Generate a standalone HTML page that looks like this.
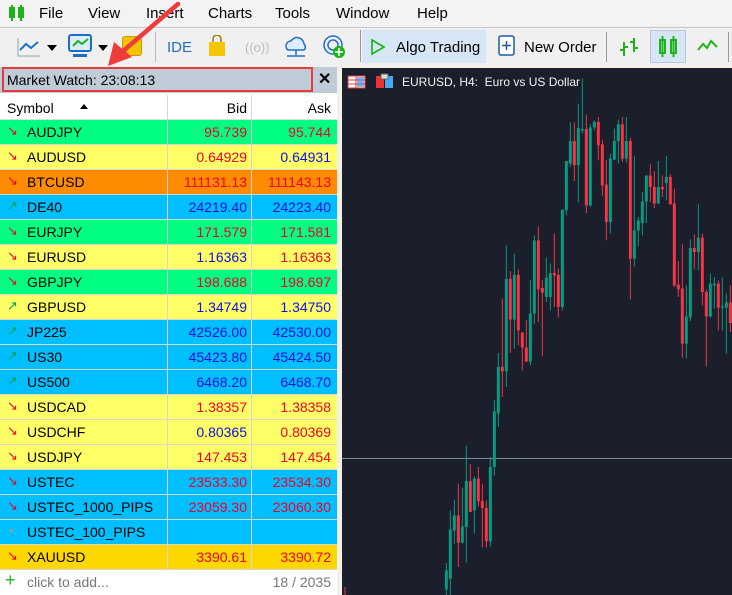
<!DOCTYPE html>
<html><head><meta charset="utf-8"><style>
*{margin:0;padding:0;box-sizing:border-box}
body{width:732px;height:595px;overflow:hidden;background:#f0f0f0;font-family:"Liberation Sans",sans-serif;position:relative}
.menu{position:absolute;top:0;left:0;width:732px;height:26px;background:#f3f3f3;font-size:15px;color:#000}
.menu span{position:absolute;top:5px}
.tb{position:absolute;top:27px;left:0;width:732px;height:37px;background:#f0f0f0;border-top:1px solid #c8c8c8}
.tb .t{position:absolute;top:11px;font-size:15px;color:#000}
.panel{position:absolute;left:0;top:67px;width:337px;height:528px;background:#fff}
.title{position:absolute;left:2px;top:0;width:311px;height:25px;border:2px solid #e8393f;background:#bfcbd7;font-size:14px;padding:3px 0 0 3px;color:#000}
.titlebg{position:absolute;left:0;top:0;width:337px;height:26px;background:#bfcbd7}
.x{position:absolute;left:318px;top:2px;font-size:16px;font-weight:bold}
.hdr{position:absolute;top:28px;left:0;width:337px;height:25px;font-size:14px;background:#fff;border-bottom:1px solid #ddd}
.row{position:absolute;left:0;width:337px;height:25px;font-size:14px;border-bottom:1px solid #d6d6d6}
.c{position:absolute;top:4px}
.s{left:27px;color:#000}
.b{right:90px;text-align:right}
.a{right:6px;text-align:right}
.v1{position:absolute;left:167px;top:0;width:1px;height:25px;background:#d6d6d6}
.v2{position:absolute;left:251px;top:0;width:1px;height:25px;background:#d6d6d6}
.ic{position:absolute;left:7px;top:3px;font-size:13px}
.r{color:#f0002a}.bl{color:#1010e0}
.chart{position:absolute;left:341px;top:67px;width:391px;height:528px;background:#1b1f2b;border-left:1px solid #f7f1cc;border-top:1px solid #f7f1cc}
</style></head><body>
<div class="menu">
<svg style="position:absolute;left:8px;top:5px" width="18" height="16"><g stroke="#1db31d" stroke-width="2" fill="none"><rect x="2" y="3" width="4" height="9"/><line x1="4" y1="0" x2="4" y2="16"/><rect x="11" y="3" width="4" height="9"/><line x1="13" y1="0" x2="13" y2="16"/></g></svg>
<span style="left:39px">File</span><span style="left:88px">View</span><span style="left:146px">Insert</span><span style="left:208px">Charts</span><span style="left:275px">Tools</span><span style="left:336px">Window</span><span style="left:417px">Help</span>
</div>
<div class="tb">
<svg style="position:absolute;left:16px;top:8px" width="26" height="22"><path d="M2 2 V20 H24" stroke="#8aa" fill="none"/><path d="M4 14 L10 8 L15 12 L22 6" stroke="#1e6ec8" stroke-width="2" fill="none"/></svg>
<div style="position:absolute;left:47px;top:17px;border:5px solid transparent;border-top:6px solid #000"></div>
<svg style="position:absolute;left:67px;top:5px" width="28" height="26"><rect x="2" y="2" width="22" height="16" rx="2" fill="#dceeff" stroke="#1e6ec8" stroke-width="2"/><path d="M6 13 L11 8 L15 11 L21 6" stroke="#1db31d" stroke-width="2" fill="none"/><rect x="6" y="21" width="14" height="3" fill="#1e6ec8"/></svg>
<div style="position:absolute;left:98px;top:17px;border:5px solid transparent;border-top:6px solid #000"></div>
<div style="position:absolute;left:122px;top:8px;width:20px;height:20px;background:#f5c400;border:1px solid #c79a00;border-radius:3px"></div>
<div style="position:absolute;left:155px;top:4px;width:1px;height:30px;background:#bbb"></div>
<span class="t" style="left:167px;color:#1e6ec8">IDE</span>
<svg style="position:absolute;left:207px;top:7px" width="20" height="22"><path d="M6 7 V4 a4 4 0 0 1 8 0 V7" stroke="#a07800" fill="none" stroke-width="1.5"/><rect x="2" y="7" width="16" height="14" fill="#f7c500"/></svg>
<span class="t" style="left:245px;color:#bbb;font-size:13px;top:12px">((o))</span>
<svg style="position:absolute;left:283px;top:8px" width="26" height="22"><path d="M5 14 a5 5 0 0 1 3-9 a7 7 0 0 1 13 3 a4 4 0 0 1 0 6 Z" fill="#dceeff" stroke="#1e6ec8" stroke-width="1.5"/><path d="M13 14 V19 M4 20 H22" stroke="#1e6ec8" stroke-width="1.5"/></svg>
<svg style="position:absolute;left:322px;top:6px" width="26" height="26"><circle cx="11" cy="11" r="9" fill="none" stroke="#1e6ec8" stroke-width="1.5"/><circle cx="11" cy="11" r="5" fill="none" stroke="#1e6ec8" stroke-width="1.5"/><circle cx="17" cy="18" r="6" fill="#1db31d"/><path d="M17 14 V22 M13 18 H21" stroke="#fff" stroke-width="1.5"/></svg>
<div style="position:absolute;left:360px;top:2px;width:1px;height:32px;background:#999"></div>
<div style="position:absolute;left:362px;top:2px;width:124px;height:33px;background:#d7e6f4"></div>
<svg style="position:absolute;left:370px;top:10px" width="16" height="18"><path d="M2 2 L14 9 L2 16 Z" fill="none" stroke="#1db31d" stroke-width="1.7"/></svg>
<span class="t" style="left:396px">Algo Trading</span>
<svg style="position:absolute;left:497px;top:6px" width="20" height="24"><rect x="2" y="2" width="15" height="19" rx="2" fill="#fff" stroke="#1e5aa0" stroke-width="1.5"/><path d="M9.5 7 V16 M5 11.5 H14" stroke="#1e5aa0" stroke-width="1.5"/></svg>
<span class="t" style="left:524px">New Order</span>
<div style="position:absolute;left:606px;top:4px;width:1px;height:30px;background:#999"></div>
<svg style="position:absolute;left:618px;top:8px" width="24" height="22"><path d="M6 6 V20 M2 14 H6 M6 11 H10 M16 2 V16 M12 6 H16 M16 12 H20" stroke="#1db31d" stroke-width="2" fill="none"/></svg>
<div style="position:absolute;left:650px;top:2px;width:36px;height:33px;background:#d7e6f4;border:1px solid #b6c8da"></div>
<svg style="position:absolute;left:658px;top:7px" width="22" height="24"><g stroke="#1db31d" stroke-width="2" fill="none"><rect x="2" y="5" width="5" height="13"/><line x1="4.5" y1="1" x2="4.5" y2="22"/><rect x="13" y="5" width="5" height="13"/><line x1="15.5" y1="1" x2="15.5" y2="22"/></g></svg>
<svg style="position:absolute;left:696px;top:10px" width="24" height="16"><path d="M2 12 L7 6 L11 10 L15 3 L21 9" stroke="#1db31d" stroke-width="2" fill="none"/></svg>
<div style="position:absolute;left:728px;top:4px;width:1px;height:30px;background:#999"></div>
</div>
<div style="position:absolute;left:0;top:64px;width:732px;height:3px;background:#f0f0f0"></div>

<div class="panel">
<div class="titlebg"></div>
<div class="title">Market Watch: 23:08:13</div>
<div class="x">✕</div>
<div class="hdr"><span class="c" style="left:7px;top:5px">Symbol</span><span style="position:absolute;left:80px;top:9px;border:4px solid transparent;border-bottom:5px solid #000;border-top:0"></span><span class="c" style="right:90px;top:5px">Bid</span><span class="c" style="right:6px;top:5px">Ask</span><div class="v1"></div><div class="v2"></div></div>
</div>
<div id="rows" style="position:absolute;left:0;top:120px">
<div class="row" style="top:0;background:#00ff80"><span class="ic r">↘</span><span class="c s">AUDJPY</span><span class="c b r">95.739</span><span class="c a r">95.744</span><div class="v1"></div><div class="v2"></div></div>
<div class="row" style="top:25px;background:#ffff66"><span class="ic r">↘</span><span class="c s">AUDUSD</span><span class="c b r">0.64929</span><span class="c a bl">0.64931</span><div class="v1"></div><div class="v2"></div></div>
<div class="row" style="top:50px;background:#ff8c00"><span class="ic r">↘</span><span class="c s">BTCUSD</span><span class="c b r">111131.13</span><span class="c a r">111143.13</span><div class="v1"></div><div class="v2"></div></div>
<div class="row" style="top:75px;background:#00bfff"><span class="ic" style="color:#00a050">↗</span><span class="c s">DE40</span><span class="c b bl">24219.40</span><span class="c a bl">24223.40</span><div class="v1"></div><div class="v2"></div></div>
<div class="row" style="top:100px;background:#00ff80"><span class="ic r">↘</span><span class="c s">EURJPY</span><span class="c b r">171.579</span><span class="c a r">171.581</span><div class="v1"></div><div class="v2"></div></div>
<div class="row" style="top:125px;background:#ffff66"><span class="ic r">↘</span><span class="c s">EURUSD</span><span class="c b bl">1.16363</span><span class="c a r">1.16363</span><div class="v1"></div><div class="v2"></div></div>
<div class="row" style="top:150px;background:#00ff80"><span class="ic r">↘</span><span class="c s">GBPJPY</span><span class="c b r">198.688</span><span class="c a r">198.697</span><div class="v1"></div><div class="v2"></div></div>
<div class="row" style="top:175px;background:#ffff66"><span class="ic" style="color:#00a050">↗</span><span class="c s">GBPUSD</span><span class="c b bl">1.34749</span><span class="c a bl">1.34750</span><div class="v1"></div><div class="v2"></div></div>
<div class="row" style="top:200px;background:#00bfff"><span class="ic" style="color:#00a050">↗</span><span class="c s">JP225</span><span class="c b bl">42526.00</span><span class="c a bl">42530.00</span><div class="v1"></div><div class="v2"></div></div>
<div class="row" style="top:225px;background:#00bfff"><span class="ic" style="color:#00a050">↗</span><span class="c s">US30</span><span class="c b bl">45423.80</span><span class="c a bl">45424.50</span><div class="v1"></div><div class="v2"></div></div>
<div class="row" style="top:250px;background:#00bfff"><span class="ic" style="color:#00a050">↗</span><span class="c s">US500</span><span class="c b bl">6468.20</span><span class="c a bl">6468.70</span><div class="v1"></div><div class="v2"></div></div>
<div class="row" style="top:275px;background:#ffff66"><span class="ic r">↘</span><span class="c s">USDCAD</span><span class="c b r">1.38357</span><span class="c a r">1.38358</span><div class="v1"></div><div class="v2"></div></div>
<div class="row" style="top:300px;background:#ffff66"><span class="ic r">↘</span><span class="c s">USDCHF</span><span class="c b bl">0.80365</span><span class="c a r">0.80369</span><div class="v1"></div><div class="v2"></div></div>
<div class="row" style="top:325px;background:#ffff66"><span class="ic r">↘</span><span class="c s">USDJPY</span><span class="c b r">147.453</span><span class="c a r">147.454</span><div class="v1"></div><div class="v2"></div></div>
<div class="row" style="top:350px;background:#00bfff"><span class="ic r">↘</span><span class="c s">USTEC</span><span class="c b r">23533.30</span><span class="c a r">23534.30</span><div class="v1"></div><div class="v2"></div></div>
<div class="row" style="top:375px;background:#00bfff"><span class="ic r">↘</span><span class="c s">USTEC_1000_PIPS</span><span class="c b r">23059.30</span><span class="c a r">23060.30</span><div class="v1"></div><div class="v2"></div></div>
<div class="row" style="top:400px;background:#00bfff"><span class="ic" style="color:#999;left:9px">•</span><span class="c s">USTEC_100_PIPS</span><div class="v1"></div><div class="v2"></div></div>
<div class="row" style="top:425px;background:#ffd700"><span class="ic r">↘</span><span class="c s">XAUUSD</span><span class="c b r">3390.61</span><span class="c a r">3390.72</span><div class="v1"></div><div class="v2"></div></div>
<div class="row" style="top:450px;background:#fff;border:none"><span class="ic" style="color:#1db31d;font-size:18px;top:0;left:5px">+</span><span class="c" style="left:27px;color:#777">click to add...</span><span class="c" style="right:6px;color:#777">18 / 2035</span></div>
</div>

<div class="chart">
<svg style="position:absolute;left:5px;top:7px" width="20" height="14"><rect x="1" y="1" width="17" height="12" fill="#fff" stroke="#e33"/><path d="M1 5 H18 M1 9 H18 M9 1 V13" stroke="#e33"/><rect x="10" y="2" width="7" height="10" fill="#4a90e2" opacity=".7"/></svg>
<svg style="position:absolute;left:33px;top:5px" width="20" height="16"><rect x="1" y="3" width="8" height="12" fill="#e33"/><rect x="10" y="3" width="8" height="12" fill="#4aa8f0"/><rect x="6" y="1" width="7" height="5" fill="#ddd" stroke="#666"/></svg>
<div style="position:absolute;left:60px;top:7px;font-size:12px;color:#f4f4f4">EURUSD, H4:&nbsp; Euro vs US Dollar</div>
<div style="position:absolute;left:0;top:390px;width:391px;height:1px;background:#7d8b96"></div>
<svg style="position:absolute;left:-1px;top:-1px" width="391" height="528" viewBox="0 0 1173 1584">
<g id="c"></g>
</svg>
</div>
<svg style="position:absolute;left:340px;top:66px" width="392" height="529" viewBox="0 0 1176 1587">
<g transform="translate(3,3)">
<path stroke-width="3" stroke="#089981" fill="none" d="M316 1488V1584M328 1330V1584M340 1298V1430M364 1262V1430M376 1137V1487M400 1228V1400M448 1170V1438M460 1000V1225M472 858V1080M496 535V960M520 561V845M568 640V895M580 505V770M616 572V705M628 590V730M664 428V730M676 282V445M688 166V300M712 110V405M724 35V200M748 172V420M760 160V190M808 260V500M820 185V280M832 157V290M856 150V287M880 268V598M892 450V538M904 375V505M916 324V468M952 282V410M976 267V400M1036 655V875M1048 517V762M1072 412V610M1108 620V752M1120 630V725M1144 632V790M1156 680V860"/>
<path stroke-width="3" stroke="#f23645" fill="none" d="M352 1250V1500M388 1192V1335M412 1200V1318M424 1250V1441M436 1300V1441M484 695V990M508 612V858M532 608V835M544 796V910M556 760V885M592 478V765M604 640V868M640 500V720M652 605V752M700 166V342M736 143V438M772 150V280M784 218V388M796 278V520M844 150V285M868 212V697M928 292V405M940 312V423M964 325V390M988 322V412M1000 365V660M1012 582V690M1024 532V872M1060 502V608M1084 500V715M1096 668V898M1132 640V790M1168 655V795M12 1560V1584"/>
<path stroke-width="9" stroke="#089981" fill="none" d="M316 1510V1568M328 1388V1535M340 1345V1390M364 1378V1427M376 1242V1380M400 1235V1330M448 1200V1423M460 1033V1200M472 900V1040M496 636V913M520 624V758M568 740V884M580 520V740M616 632V690M628 618V690M664 428V720M676 282V430M688 222V290M712 183V294M724 186V191M748 181V415M760 165V181M808 275V465M820 222V278M832 172V222M856 222V275M880 490V575M892 460V490M904 404V468M916 326V404M952 360V410M976 330V348M1036 748V830M1048 543V752M1072 512V555M1108 650V748M1120 650V655M1144 718V722M1156 706V722"/>
<path stroke-width="9" stroke="#f23645" fill="none" d="M352 1345V1427M388 1242V1335M412 1235V1303M424 1302V1323M436 1323V1423M484 900V913M508 636V758M532 624V790M544 796V842M556 842V884M592 520V667M604 663V677M640 618V625M652 624V720M700 222V294M736 186V415M772 165V235M784 232V355M796 353V465M844 172V275M868 222V575M928 326V360M940 360V410M964 360V367M988 330V412M1000 410V655M1012 653V667M1024 665V830M1060 543V555M1084 512V675M1096 675V748M1132 650V722M1168 706V768"/>
</g></svg>

<svg style="position:absolute;left:0;top:0" width="732" height="100"><line x1="178" y1="4" x2="122" y2="52" stroke="#ee3b3b" stroke-width="4.5" stroke-linecap="round"/><path d="M108 66 L114 42 L132 57 Z" fill="#ee3b3b"/></svg>
</body></html>
